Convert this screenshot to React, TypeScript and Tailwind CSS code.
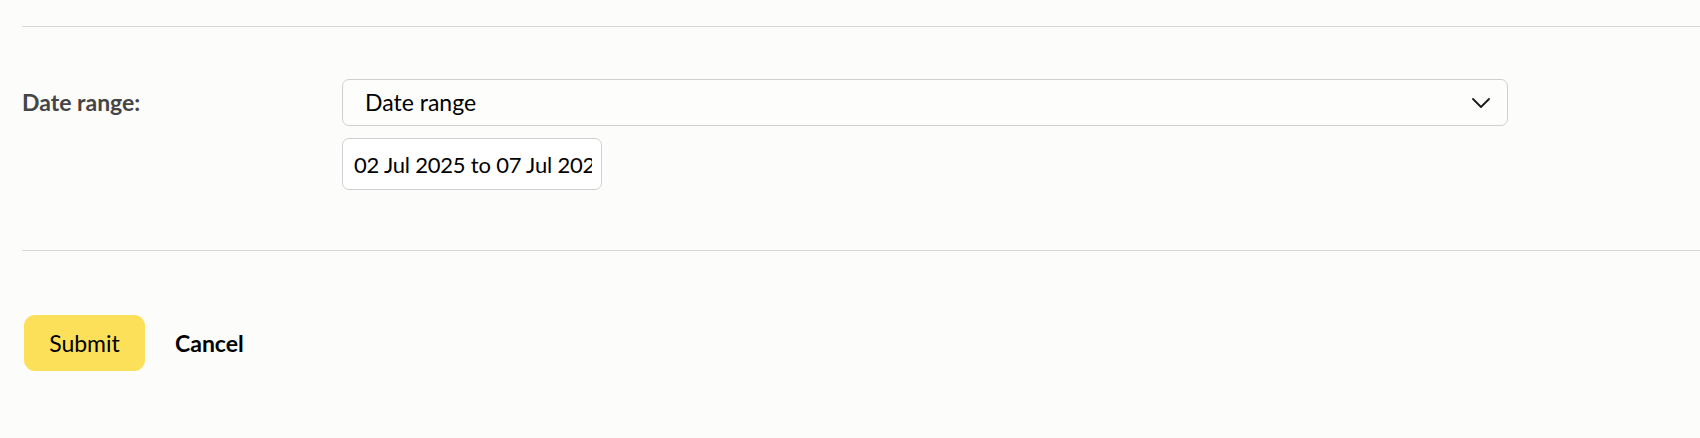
import React from "react";

export default function App() {
  return (
    <div
      className="w-[1700px] h-[438px] bg-[#fcfcfa] pl-[22px] pt-[26px]"
      style={{ fontFamily: "Lato, 'Noto Sans', sans-serif" }}
    >
      <div className="border-t border-[#d6d6d4]" />
      <div className="flex pt-[52px]">
        <div className="w-[320px] h-[47px] flex items-center">
          <span className="text-[23px] font-bold text-[#454545]">Date range:</span>
        </div>
        <div className="flex flex-col gap-[12px]">
          <div className="w-[1166px] h-[47px] border border-[#d0d0d0] rounded-[7px] bg-[#fdfdfc] flex items-center justify-between pl-[22px] pr-[17px]">
            <span className="text-[23px] text-black">Date range</span>
            <svg width="18" height="10" viewBox="0 0 18 10" fill="none">
              <path d="M1 1l8 8 8-8" stroke="#1a1a1a" strokeWidth="1.8" strokeLinecap="round" strokeLinejoin="round" />
            </svg>
          </div>
          <div className="w-[260px] h-[52px] border border-[#d0d0d0] rounded-[7px] bg-white flex items-center pl-[11px] pr-[9px]">
            <div className="overflow-hidden">
              <span className="text-[22px] text-black whitespace-nowrap tracking-[-0.2px]">02 Jul 2025 to 07 Jul 2025</span>
            </div>
          </div>
        </div>
      </div>
      <div className="border-t border-[#d6d6d4] mt-[60px]" />
      <div className="flex items-center pt-[64px] pl-[2px]">
        <button className="w-[121px] h-[56px] rounded-[11px] bg-[#fce05a] text-[23px] text-black">Submit</button>
        <button className="ml-[30px] text-[23px] font-bold text-black">Cancel</button>
      </div>
    </div>
  );
}
